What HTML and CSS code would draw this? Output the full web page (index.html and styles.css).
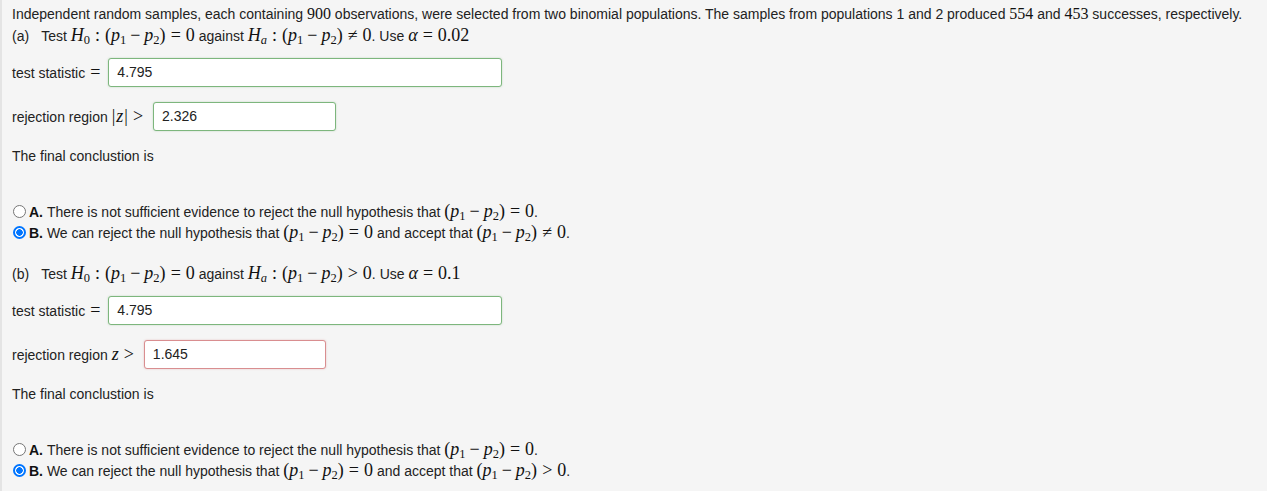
FILE: index.html
```html
<!DOCTYPE html>
<html>
<head>
<meta charset="utf-8">
<link rel="stylesheet" href="styles.css">
</head>
<body>
<div class="page">
  <div class="line l1">Independent random samples, each containing <span class="m num">900</span> observations, were selected from two binomial populations. The samples from populations 1 and 2 produced <span class="m num">554</span> and <span class="m num">453</span> successes, respectively.</div>
  <div class="line l2"><span class="part">(a)</span>Test <span class="m"><i>H</i><sub>0</sub><span class="rel">:</span>(<i>p</i><sub>1</sub><span class="bin">−</span><i>p</i><sub>2</sub>)<span class="rel">=</span>0</span> against <span class="m"><i>H</i><sub><i>a</i></sub><span class="rel">:</span>(<i>p</i><sub>1</sub><span class="bin">−</span><i>p</i><sub>2</sub>)<span class="rel">≠</span>0</span>. Use <span class="m"><i>α</i><span class="rel">=</span>0.02</span></div>

  <div class="row r1"><span class="lab">test statistic<span class="m"><span class="rel">=</span></span></span><div class="inp ok w-long">4.795</div></div>
  <div class="row r2"><span class="lab">rejection region <span class="m">|<i class="zv">z</i>|<span class="rel">&gt;</span></span></span><div class="inp ok w-short">2.326</div></div>

  <div class="line fin">The final conclustion is</div>

  <div class="opt oa"><span class="radio"></span><b>A.</b>&nbsp;There is not sufficient evidence to reject the null hypothesis that&nbsp;<span class="m">(<i>p</i><sub>1</sub><span class="bin">−</span><i>p</i><sub>2</sub>)<span class="rel">=</span>0</span>.</div>
  <div class="opt"><span class="radio on"></span><b>B.</b>&nbsp;We can reject the null hypothesis that&nbsp;<span class="m">(<i>p</i><sub>1</sub><span class="bin">−</span><i>p</i><sub>2</sub>)<span class="rel">=</span>0</span>&nbsp;and accept that&nbsp;<span class="m">(<i>p</i><sub>1</sub><span class="bin">−</span><i>p</i><sub>2</sub>)<span class="rel">≠</span>0</span>.</div>

  <div class="line lb"><span class="part">(b)</span>Test <span class="m"><i>H</i><sub>0</sub><span class="rel">:</span>(<i>p</i><sub>1</sub><span class="bin">−</span><i>p</i><sub>2</sub>)<span class="rel">=</span>0</span> against <span class="m"><i>H</i><sub><i>a</i></sub><span class="rel">:</span>(<i>p</i><sub>1</sub><span class="bin">−</span><i>p</i><sub>2</sub>)<span class="rel">&gt;</span>0</span>. Use <span class="m"><i>α</i><span class="rel">=</span>0.1</span></div>

  <div class="row r1"><span class="lab">test statistic<span class="m"><span class="rel">=</span></span></span><div class="inp ok w-long">4.795</div></div>
  <div class="row r2"><span class="lab">rejection region <span class="m"><i>z</i><span class="rel">&gt;</span></span></span><div class="inp bad w-short2">1.645</div></div>

  <div class="line fin">The final conclustion is</div>

  <div class="opt oa"><span class="radio"></span><b>A.</b>&nbsp;There is not sufficient evidence to reject the null hypothesis that&nbsp;<span class="m">(<i>p</i><sub>1</sub><span class="bin">−</span><i>p</i><sub>2</sub>)<span class="rel">=</span>0</span>.</div>
  <div class="opt"><span class="radio on"></span><b>B.</b>&nbsp;We can reject the null hypothesis that&nbsp;<span class="m">(<i>p</i><sub>1</sub><span class="bin">−</span><i>p</i><sub>2</sub>)<span class="rel">=</span>0</span>&nbsp;and accept that&nbsp;<span class="m">(<i>p</i><sub>1</sub><span class="bin">−</span><i>p</i><sub>2</sub>)<span class="rel">&gt;</span>0</span>.</div>
</div>
</body>
</html>
```
FILE: styles.css
```css
html, body {
  margin: 0;
  padding: 0;
  background: #f5f5f5;
}
.page {
  box-sizing: border-box;
  min-height: 491px;
  padding: 4px 12px 0 10px;
  border-left: 2px solid #e4e4e4;
  background: #f5f5f5;
  font-family: "Liberation Sans", Arial, sans-serif;
  font-size: 14px;
  color: #222;
}
.line {
  height: 20px;
  line-height: 20px;
  white-space: nowrap;
}
.l2 { margin-top: 1px; }
.part { margin-right: 12px; }
.m {
  font-family: "Liberation Serif", "DejaVu Serif", serif;
  font-size: 18px;
  color: #111;
}
.m.num { font-size: 16px; }
.m i { font-style: italic; }
.m sub {
  font-size: 12.5px;
  vertical-align: -3px;
  line-height: 0;
}
.zv { margin: 0 1px; }
.rel { margin: 0 0.28em; }
.bin { margin: 0 0.22em; }
.row {
  display: flex;
  align-items: center;
  height: 29px;
}
.r1 { margin-top: 13px; }
.r2 { margin-top: 15px; }
.lab { margin-right: 3px; white-space: nowrap; }
.r2 .lab { margin-right: 5px; }
.inp {
  box-sizing: border-box;
  height: 29px;
  line-height: 27px;
  padding: 0 8px;
  background: #fff;
  border: 1px solid #7db67d;
  border-radius: 3px;
  box-shadow: 0 0 2px rgba(90, 160, 90, 0.35);
  font-size: 14px;
  color: #222;
}
.inp.bad {
  border-color: #d98e90;
  box-shadow: 0 0 2px rgba(200, 90, 90, 0.35);
}
.w-long { width: 394px; }
.w-short { width: 183px; }
.w-short2 { width: 182px; }
.fin { margin-top: 15px; }
.opt {
  display: flex;
  align-items: center;
  height: 21px;
  white-space: nowrap;
}
.oa { margin-top: 35px; }
.radio {
  box-sizing: border-box;
  width: 13px;
  height: 13px;
  border-radius: 50%;
  border: 1px solid #767676;
  background: #fff;
  margin: 0 3px 0 1px;
  flex: none;
}
.radio.on {
  border: 2px solid #0075ff;
  background: radial-gradient(circle, #0075ff 0 3px, #fff 3.5px);
}
.opt b { font-weight: bold; color: #111; }
.lb { margin-top: 20px; }
```
